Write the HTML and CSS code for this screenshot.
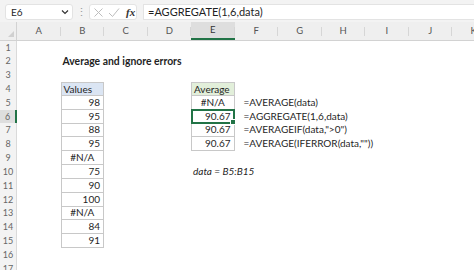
FILE: index.html
```html
<!DOCTYPE html>
<html>
<head>
  <meta charset="UTF-8">
  <title>Average and ignore errors</title>
  <link rel="stylesheet" href="styles.css">
</head>
<body>
  <div class="toolbar">
    <div class="namebox">
      <span>E6</span>
      <svg width="8" height="6" viewBox="0 0 8 6"><path d="M1 1.5 L4 4.5 L7 1.5" fill="none" stroke="#333" stroke-width="1.2"/></svg>
    </div>
    <div class="dots">&#8942;</div>
    <div class="fxbox">
      <svg width="11" height="11" viewBox="0 0 11 11"><path d="M1.5 1.5 L9.5 9.5 M9.5 1.5 L1.5 9.5" stroke="#bdbdbd" stroke-width="1"/></svg>
      <svg width="12" height="11" viewBox="0 0 12 11"><path d="M1 6 L4.5 9.5 L11 1.5" fill="none" stroke="#bdbdbd" stroke-width="1"/></svg>
      <span class="fx">fx</span>
    </div>
    <div class="formula">=AGGREGATE(1,6,data)</div>
  </div>

  <div class="sheet">
    <div class="row head">
      <div class="corner"><span class="tri"></span></div>
      <div class="col">A</div>
      <div class="col">B</div>
      <div class="col">C</div>
      <div class="col">D</div>
      <div class="col sel">E</div>
      <div class="col">F</div>
      <div class="col">G</div>
      <div class="col">H</div>
      <div class="col">I</div>
      <div class="col">J</div>
      <div class="col">K</div>
    </div>

    <div class="row"><div class="num">1</div></div>
    <div class="row">
      <div class="num">2</div>
      <div class="cell title c-b">Average and ignore errors</div>
    </div>
    <div class="row"><div class="num">3</div></div>
    <div class="row">
      <div class="num">4</div>
      <div class="cell box top hdr-blue c-b">Values</div>
      <div class="cell box top hdr-green c-e">Average</div>
    </div>
    <div class="row">
      <div class="num">5</div>
      <div class="cell box c-b">98</div>
      <div class="cell box err c-e">#N/A</div>
      <div class="cell note c-f">=AVERAGE(data)</div>
    </div>
    <div class="row">
      <div class="num sel">6</div>
      <div class="cell box c-b">95</div>
      <div class="cell box active c-e">90.67<span class="handle"></span></div>
      <div class="cell note c-f">=AGGREGATE(1,6,data)</div>
    </div>
    <div class="row">
      <div class="num">7</div>
      <div class="cell box c-b">88</div>
      <div class="cell box c-e">90.67</div>
      <div class="cell note c-f">=AVERAGEIF(data,"&gt;0")</div>
    </div>
    <div class="row">
      <div class="num">8</div>
      <div class="cell box c-b">95</div>
      <div class="cell box c-e">90.67</div>
      <div class="cell note c-f">=AVERAGE(IFERROR(data,""))</div>
    </div>
    <div class="row">
      <div class="num">9</div>
      <div class="cell box err c-b">#N/A</div>
    </div>
    <div class="row">
      <div class="num">10</div>
      <div class="cell box c-b">75</div>
      <div class="cell name c-e">data = B5:B15</div>
    </div>
    <div class="row">
      <div class="num">11</div>
      <div class="cell box c-b">90</div>
    </div>
    <div class="row">
      <div class="num">12</div>
      <div class="cell box c-b">100</div>
    </div>
    <div class="row">
      <div class="num">13</div>
      <div class="cell box err c-b">#N/A</div>
    </div>
    <div class="row">
      <div class="num">14</div>
      <div class="cell box c-b">84</div>
    </div>
    <div class="row">
      <div class="num">15</div>
      <div class="cell box c-b">91</div>
    </div>
    <div class="row"><div class="num">16</div></div>
    <div class="row"><div class="num">17</div></div>
  </div>
</body>
</html>
```

FILE: styles.css
```css
/* Excel-like sheet */
body {
  margin: 0;
  width: 474px;
  height: 270px;
  overflow: hidden;
  background: #fff;
  font-family: Lato, "Open Sans", sans-serif;
  color: #1f1f1f;
}

/* formula bar */
.toolbar {
  height: 22px;
  box-sizing: border-box;
  padding: 4px 0 2px 5px;
  background: #f3f3f3;
  display: flex;
  align-items: stretch;
}
.namebox {
  width: 68px;
  box-sizing: border-box;
  background: #fff;
  border: 1px solid #e3e3e3;
  border-radius: 3px;
  display: flex;
  align-items: center;
  justify-content: space-between;
  padding: 0 3px 0 5px;
  font-size: 10px;
}
.dots {
  width: 16px;
  text-align: center;
  color: #9a9a9a;
  font-size: 11px;
  line-height: 16px;
}
.fxbox {
  width: 48px;
  box-sizing: border-box;
  background: #fff;
  border: 1px solid #e3e3e3;
  border-radius: 3px;
  display: flex;
  align-items: center;
  gap: 4px;
  padding-left: 3px;
}
.fx {
  font-family: "Liberation Serif", serif;
  font-style: italic;
  font-weight: bold;
  font-size: 11px;
  color: #333;
  margin-left: 2px;
}
.formula {
  flex: 1;
  margin-left: 6px;
  background: #fff;
  border: 1px solid #e3e3e3;
  border-right: none;
  padding-left: 4px;
  font-size: 11px;
  line-height: 14px;
}

/* grid */
.row {
  display: grid;
  grid-template-columns: 17px repeat(11, 43.5px);
  height: 13.83px;
  font-size: 10px;
  line-height: 13px;
}
.row.head {
  height: 18.5px;
  background: #efefef;
  border-bottom: 1px solid #d2d2d2;
  box-sizing: border-box;
}
.corner {
  position: relative;
  border-right: 1px solid #d2d2d2;
}
.tri {
  position: absolute;
  right: 2px;
  bottom: 3px;
  width: 0;
  height: 0;
  border-left: 6px solid transparent;
  border-bottom: 6px solid #d0d0d0;
}
.col {
  text-align: center;
  color: #555;
  font-size: 9.5px;
  line-height: 17px;
  position: relative;
}
.col::after {
  content: "";
  position: absolute;
  right: 0;
  top: 5px;
  height: 9px;
  border-right: 1px solid #d6d6d6;
}
.col.sel {
  background: #dedede;
  border-bottom: 2px solid #217346;
  line-height: 16px;
  color: #333;
}
.num {
  grid-column: 1;
  background: #f3f3f3;
  border-right: 1px solid #dadada;
  text-align: center;
  color: #666;
  font-size: 9px;
  line-height: 14px;
}
.num.sel {
  background: #dedede;
  border-right: 2px solid #217346;
}

.cell {
  white-space: nowrap;
  padding: 0 3px;
}
.c-b { grid-column: 3; }
.c-e { grid-column: 6; }
.c-f { grid-column: 7 / span 4; }
.title {
  grid-column: 3 / span 4;
  font-weight: bold;
  font-size: 10.4px;
  padding-left: 2px;
  line-height: 14px;
}
.box {
  box-sizing: border-box;
  border: 1px solid #c8c8c8;
  border-top: none;
  text-align: right;
  line-height: 12px;
}
.box.top {
  border-top: 1px solid #c8c8c8;
  text-align: left;
  padding-left: 2px;
}
.hdr-blue { background: #dbe5f3; }
.hdr-green { background: #e2efda; }
.err { text-align: center; }
.active {
  position: relative;
  border: 2px solid #217346;
  margin-top: -1px;
  height: calc(100% + 1px);
  line-height: 11px;
  padding-right: 2px;
}
.handle {
  position: absolute;
  right: -3px;
  bottom: -3px;
  width: 4px;
  height: 4px;
  background: #217346;
  border: 1px solid #fff;
}
.note {
  padding-left: 9px;
  line-height: 13px;
}
.name {
  grid-column: 6 / span 3;
  font-style: italic;
  padding-left: 2px;
}
```
